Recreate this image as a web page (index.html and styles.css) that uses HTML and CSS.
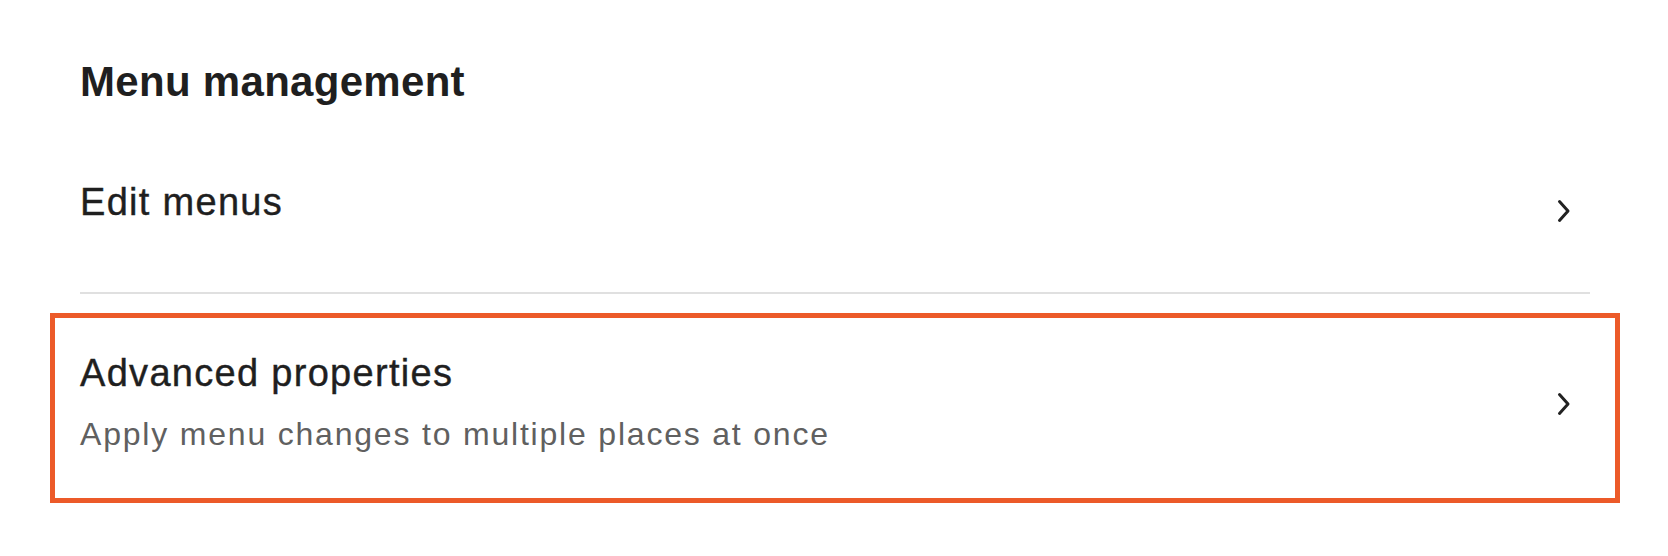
FILE: index.html
```html
<!DOCTYPE html>
<html lang="en">
<head>
  <meta charset="UTF-8">
  <title>Menu management</title>
  <link rel="stylesheet" href="styles.css">
</head>
<body>

  <section class="settings">
    <h2 class="settings-title">Menu management</h2>

    <div class="menu-list">
      <a href="#" class="menu-row menu-row-plain">
        <div class="menu-text">
          <span class="menu-label">Edit menus</span>
        </div>
        <svg class="chevron" width="14" height="24" viewBox="0 0 14 24">
          <polyline points="2.5,2.5 11,12 2.5,21.5" />
        </svg>
      </a>

      <a href="#" class="menu-row menu-row-focused">
        <div class="menu-text">
          <span class="menu-label">Advanced properties</span>
          <span class="menu-desc">Apply menu changes to multiple places at once</span>
        </div>
        <svg class="chevron" width="14" height="24" viewBox="0 0 14 24">
          <polyline points="2.5,2.5 11,12 2.5,21.5" />
        </svg>
      </a>
    </div>
  </section>

</body>
</html>
```

FILE: styles.css
```css
body {
  margin: 0;
  background-color: #ffffff;
  font-family: "Liberation Sans", Arial, sans-serif;
  color: #1f1f1f;
}

.settings {
  padding: 56px 78px 0 80px;
}

.settings-title {
  margin: 0 0 36px;
  font-size: 42px;
  line-height: 52px;
  font-weight: 700;
  letter-spacing: 0.3px;
}

.menu-row {
  display: flex;
  align-items: center;
  justify-content: space-between;
  text-decoration: none;
  color: inherit;
}

.menu-row-plain {
  padding: 34px 0 66px;
  border-bottom: 2px solid #e0e0e0;
}

.menu-row-plain .chevron {
  margin-top: 18px;
}

.menu-row-focused {
  margin: 19px -30px 0;
  padding: 31px 25px 44px;
  border: 5px solid #ec5a29;
}

.menu-row-focused .chevron {
  margin-top: 5px;
}

.menu-text {
  display: flex;
  flex-direction: column;
}

.menu-label {
  font-size: 38px;
  line-height: 48px;
  letter-spacing: 1.3px;
  -webkit-text-stroke: 0.4px #1f1f1f;
}

.menu-desc {
  margin-top: 17px;
  font-size: 32px;
  line-height: 40px;
  letter-spacing: 1.8px;
  color: #606060;
}

.chevron {
  margin-right: 19px;
  fill: none;
  stroke: #222222;
  stroke-width: 3;
  stroke-linecap: round;
  stroke-linejoin: round;
}
```
